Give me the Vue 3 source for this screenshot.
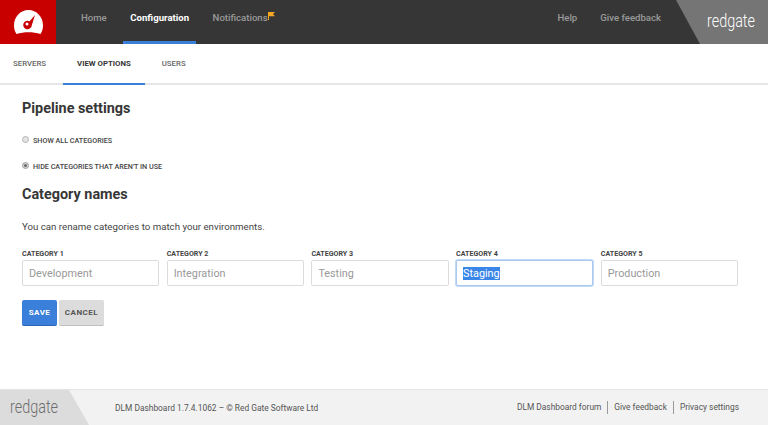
<script setup>
import { ref, onMounted } from 'vue'

const categorias = ref([
  { nombre: 'CATEGORY 1', valor: 'Development' },
  { nombre: 'CATEGORY 2', valor: 'Integration' },
  { nombre: 'CATEGORY 3', valor: 'Testing' },
  { nombre: 'CATEGORY 4', valor: 'Staging' },
  { nombre: 'CATEGORY 5', valor: 'Production' }
])

const modo = ref('hide')
const campoActivo = ref(null)

// La categoria 4 aparece enfocada y con el texto seleccionado
onMounted(() => {
  const campo = campoActivo.value && campoActivo.value[0]
  if (campo) {
    campo.focus()
    campo.select()
  }
})
</script>

<template>
  <div class="pagina">
    <header class="cabecera">
      <div class="logo">
        <svg width="29" height="24" viewBox="0 0 29 24">
          <path d="M2.500 24C0.800 21.500 0 18.500 0 15.500 C0 6.500 6.500 0 14.500 0 C22.500 0 29 6.500 29 15.500 C29 18.500 28.200 21.500 26.500 24 C19 21.500 10 21.500 2.500 24Z" fill="#fff" />
          <path fill-rule="evenodd" d="M21 5 L15.600 11.200 A4.300 4.300 0 1 0 17.800 15.200 Z M13 12.500 A1.500 1.500 0 1 1 13 15.500 A1.500 1.500 0 1 1 13 12.500 Z" fill="#c80000" />
        </svg>
      </div>
      <nav class="nav-principal">
        <a class="nav-item">Home</a>
        <a class="nav-item activo">Configuration</a>
        <a class="nav-item">Notifications<svg class="bandera" width="7" height="8" viewBox="0 0 7 8"><path d="M0 0H7L5 2L7 4.200H1V8H0Z" fill="#f5a623" /></svg></a>
      </nav>
      <nav class="nav-derecha">
        <a class="nav-item">Help</a>
        <a class="nav-item">Give feedback</a>
      </nav>
      <div class="marca"><span>redgate</span></div>
    </header>

    <nav class="subnav">
      <a class="sub-item">SERVERS</a>
      <a class="sub-item activo">VIEW OPTIONS</a>
      <a class="sub-item">USERS</a>
    </nav>

    <main class="contenido">
      <h2 class="titulo primero">Pipeline settings</h2>
      <label class="opcion">
        <input v-model="modo" type="radio" value="show" />
        <span>SHOW ALL CATEGORIES</span>
      </label>
      <label class="opcion">
        <input v-model="modo" type="radio" value="hide" />
        <span>HIDE CATEGORIES THAT AREN'T IN USE</span>
      </label>

      <h2 class="titulo">Category names</h2>
      <p class="texto">You can rename categories to match your environments.</p>

      <div class="categorias">
        <div v-for="(cat, i) in categorias" :key="cat.nombre" class="campo">
          <label>{{ cat.nombre }}</label>
          <input v-if="i === 3" ref="campoActivo" v-model="cat.valor" type="text" />
          <input v-else v-model="cat.valor" type="text" />
        </div>
      </div>

      <div class="botones">
        <button class="btn guardar">SAVE</button>
        <button class="btn cancelar">CANCEL</button>
      </div>
    </main>

    <footer class="pie">
      <div class="pie-marca"><span>redgate</span></div>
      <div class="pie-version">DLM Dashboard 1.7.4.1062 – © Red Gate Software Ltd</div>
      <div class="pie-enlaces">
        <a>DLM Dashboard forum</a>
        <a>Give feedback</a>
        <a>Privacy settings</a>
      </div>
    </footer>
  </div>
</template>

<style>
html, body {
  margin: 0;
  background: #fff;
}
</style>

<style scoped>
.pagina {
  display: flex;
  flex-direction: column;
  height: 425px;
  overflow: hidden;
  font-family: Roboto, "Liberation Sans", sans-serif;
  color: #363636;
}

.cabecera {
  display: flex;
  flex-shrink: 0;
  height: 44px;
  background: #363636;
}

.logo {
  display: flex;
  align-items: center;
  justify-content: center;
  width: 56px;
  background: #c80000;
}

.nav-principal {
  display: flex;
  gap: 9.5px;
  margin-left: 18px;
}

.nav-derecha {
  display: flex;
  gap: 9px;
  margin-left: auto;
  margin-right: 8px;
}

.nav-item {
  display: flex;
  align-items: center;
  box-sizing: border-box;
  height: 44px;
  padding: 0 7px 7px;
  font-size: 9.6px;
  font-weight: 500;
  color: #9a9a9a;
  border-bottom: 3px solid transparent;
}

.nav-item.activo {
  color: #fff;
  font-weight: 700;
  border-bottom-color: #3a7fd9;
}

.bandera {
  margin-top: -3px;
}

.marca {
  display: flex;
  align-items: center;
  justify-content: flex-end;
  box-sizing: border-box;
  width: 92px;
  padding-right: 13px;
  padding-bottom: 3px;
  background: #757575;
  clip-path: polygon(0 0, 100% 0, 100% 100%, 24px 100%);
  color: #fff;
  font-size: 18px;
  font-weight: 300;
}

.marca span {
  display: inline-block;
  transform: scaleX(0.8);
  transform-origin: right center;
}

.subnav {
  display: flex;
  flex-shrink: 0;
  box-sizing: border-box;
  height: 41px;
  border-bottom: 2px solid #e6e6e6;
}

.sub-item {
  display: flex;
  align-items: center;
  box-sizing: border-box;
  height: 41px;
  padding: 0 14px;
  margin-right: 3px;
  font-size: 7.8px;
  font-weight: 500;
  color: #666;
  border-bottom: 2px solid transparent;
}

.sub-item:first-child {
  padding-left: 13px;
}

.sub-item.activo {
  color: #363636;
  font-weight: 700;
  border-bottom-color: #3a7fd9;
}

.contenido {
  flex: 1;
  padding: 0 30px 0 22px;
}

.titulo {
  margin: 13px 0 0;
  font-size: 14.4px;
  line-height: 20px;
  font-weight: 700;
  color: #363636;
}

.titulo.primero {
  margin-top: 14px;
}

.opcion {
  display: flex;
  align-items: center;
  gap: 4px;
  height: 12px;
  margin-top: 14px;
  font-size: 7.2px;
  font-weight: 500;
  color: #444;
}

.titulo.primero + .opcion {
  margin-top: 15px;
}

.opcion input {
  appearance: none;
  box-sizing: border-box;
  width: 7px;
  height: 7px;
  margin: -2px 0 0;
  border: 1px solid #b5b5b5;
  border-radius: 50%;
  background: #e4e4e4;
}

.opcion input:checked {
  background: #666;
  box-shadow: inset 0 0 0 1px #ddd;
}

.texto {
  margin: 15px 0 0;
  font-size: 9.7px;
  line-height: 14px;
  color: #444;
}

.categorias {
  display: grid;
  grid-template-columns: repeat(5, 1fr);
  gap: 7.5px;
  margin-top: 15px;
}

.campo label {
  display: block;
  font-size: 7.1px;
  line-height: 10px;
  font-weight: 700;
  color: #444;
  margin-bottom: 1px;
}

.campo input {
  display: block;
  box-sizing: border-box;
  width: 100%;
  height: 26px;
  padding: 0 6px;
  border: 1px solid #dcdcdc;
  border-radius: 2px;
  outline: none;
  font-family: inherit;
  font-size: 10.8px;
  color: #999;
  background: #fff;
}

.campo input:focus {
  border-color: #a9c8f2;
  box-shadow: 0 0 0 1px #c4d9f6;
  color: #555;
}

.campo input::selection {
  background: #3a86e8;
  color: #fff;
}

.botones {
  display: flex;
  gap: 2px;
  margin-top: 14px;
}

.btn {
  height: 26px;
  padding: 0;
  border: none;
  border-radius: 2px;
  font-family: inherit;
  font-size: 8px;
  font-weight: 700;
  letter-spacing: 0.5px;
}

.guardar {
  width: 35px;
  background: #3a7fd9;
  color: #fff;
  border-bottom: 1px solid #2a66b5;
}

.cancelar {
  width: 45px;
  background: #dcdcdc;
  color: #555;
  border-bottom: 1px solid #c0c0c0;
}

.pie {
  display: flex;
  align-items: center;
  flex-shrink: 0;
  box-sizing: border-box;
  height: 36px;
  background: #f2f2f2;
  border-top: 1px solid #e4e4e4;
  font-size: 8.4px;
  color: #555;
}

.pie-marca {
  display: flex;
  align-items: center;
  box-sizing: border-box;
  width: 89px;
  height: 100%;
  padding-left: 10px;
  padding-bottom: 2px;
  background: #dcdcdc;
  clip-path: polygon(0 0, 69px 0, 100% 100%, 0 100%);
  color: #6e6e6e;
  font-size: 18px;
  font-weight: 300;
}

.pie-marca span {
  display: inline-block;
  transform: scaleX(0.8);
  transform-origin: left center;
}

.pie-version {
  margin-left: 26px;
}

.pie-enlaces {
  display: flex;
  margin-left: auto;
  margin-right: 29px;
}

.pie-enlaces a {
  padding: 0 6px;
  line-height: 13px;
  border-left: 1px solid #999;
}

.pie-enlaces a:first-child {
  border-left: none;
}

.pie-enlaces a:last-child {
  padding-right: 0;
}
</style>
